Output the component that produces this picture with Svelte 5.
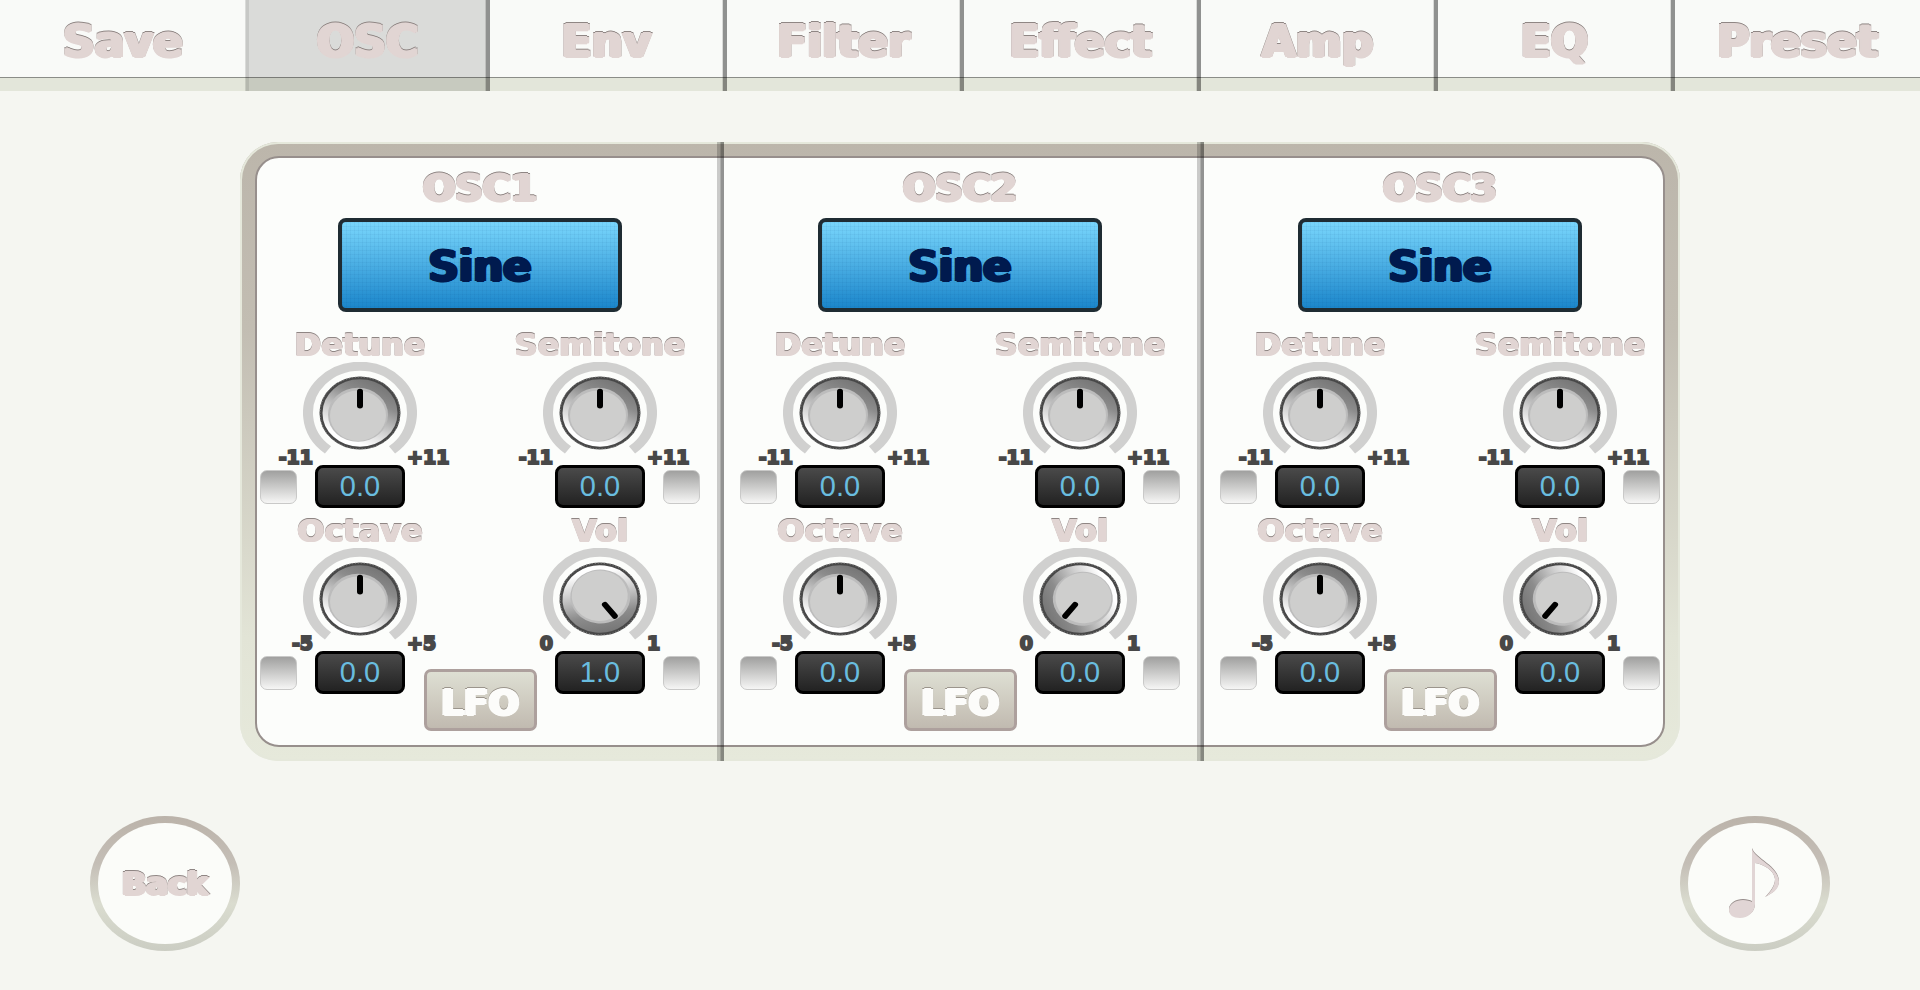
<script>
    const tabs = ["Save", "OSC", "Env", "Filter", "Effect", "Amp", "EQ", "Preset"];
    let activeTab = "OSC";

    // full sweep of a knob, in degrees either side of twelve o'clock
    const SWEEP = 142;

    let makeOsc = (name, vol) => ({
        name,
        wave: "Sine",
        knobs: [
            { label: "Detune", min: -11, max: 11, low: "-11", high: "+11", value: 0, on: false },
            { label: "Semitone", min: -11, max: 11, low: "-11", high: "+11", value: 0, on: false },
            { label: "Octave", min: -5, max: 5, low: "-5", high: "+5", value: 0, on: false },
            { label: "Vol", min: 0, max: 1, low: "0", high: "1", value: vol, on: false }
        ]
    });

    let oscs = [makeOsc("OSC1", 1), makeOsc("OSC2", 0), makeOsc("OSC3", 0)];

    let angle = (knob) => ((knob.value - knob.min) / (knob.max - knob.min)) * 2 * SWEEP - SWEEP;
</script>

<svelte:head>
    <title>OSC</title>
</svelte:head>

<nav class="tabs">
    {#each tabs as tab}
        <button class="tab" class:active={tab === activeTab} on:click={() => (activeTab = tab)}>
            <span class="etched">{tab}</span>
        </button>
    {/each}
</nav>

<main class="panel">
    {#each oscs as osc}
        <section class="osc">
            <h2 class="etched">{osc.name}</h2>
            <button class="screen">{osc.wave}</button>

            <div class="knobs">
                {#each osc.knobs as knob, i}
                    <div class="cell">
                        <label class="name etched" for="{osc.name}-{knob.label}">{knob.label}</label>
                        <div class="dial">
                            <svg viewBox="-57 -51 114 102" aria-hidden="true">
                                <defs>
                                    <linearGradient id="rim-{osc.name}-{i}" x1="0.75" y1="0" x2="0.25" y2="1">
                                        <stop offset="0" stop-color="#707070" />
                                        <stop offset="0.3" stop-color="#8c8c8c" />
                                        <stop offset="0.6" stop-color="#d0d0d0" />
                                        <stop offset="0.85" stop-color="#ffffff" />
                                    </linearGradient>
                                </defs>
                                <g transform="scale(1 0.9)">
                                    <path d="M-32 41 A52 52 0 1 1 32 41" fill="none" stroke="#d0d0cf" stroke-width="10" />
                                    <g transform="rotate({angle(knob)})">
                                        <circle r="39" fill="url(#rim-{osc.name}-{i})" stroke="#484848" stroke-width="3" />
                                        <circle r="40" fill="none" stroke="#999" stroke-width="1" stroke-dasharray="1 2" />
                                        <circle cx="-2" cy="2" r="30" fill="#bcbcbc" />
                                        <circle cx="-2" cy="3" r="28" fill="#cececd" />
                                        <path d="M0 -24V-8" stroke="#000" stroke-width="6" stroke-linecap="round" />
                                    </g>
                                </g>
                            </svg>
                            <input
                                type="range"
                                id="{osc.name}-{knob.label}"
                                min={knob.min}
                                max={knob.max}
                                step={knob.max === 1 ? 0.1 : 1}
                                bind:value={knob.value}
                            />
                        </div>
                        <div class="scale">
                            <span>{knob.low}</span>
                            <span>{knob.high}</span>
                        </div>
                        <div class="readout">
                            <input type="checkbox" aria-label="{knob.label} enable" bind:checked={knob.on} />
                            <input type="text" aria-label="{knob.label} value" value={knob.value.toFixed(1)} readonly />
                        </div>
                    </div>
                {/each}
            </div>

            <button class="lfo"><span>LFO</span></button>
        </section>
    {/each}
</main>

<footer>
    <button class="round"><span class="etched">Back</span></button>
    <button class="round" aria-label="Keyboard">
        <svg viewBox="0 0 52 72" aria-hidden="true">
            <path
                class="edge"
                d="M23 0C26 10 50 18 50 33C50 41 42 46 36 49C42 43 46 37 46 31C45 22 34 16 26 15V56C26 64 19 69 11 69C4 69 0 66 0 61C0 55 7 51 14 51C18 51 21 52 23 53Z"
            />
            <path
                class="note"
                d="M23 1C26 11 50 19 50 34C50 42 42 46 36 49C43 43 46 37 46 31C45 22 34 16 26 15V56C26 64 19 70 11 70C4 70 0 67 0 62C0 56 7 52 14 52C18 52 21 53 23 54Z"
            />
        </svg>
    </button>
</footer>

<style>
    :global(body) {
        background: #f5f6f1;
        font-family: "DejaVu Sans", Verdana, sans-serif;
    }

    button {
        border: 0;
        padding: 0;
        background: none;
        font-family: inherit;
        cursor: pointer;
    }

    /* currentColor shadows on all sides thicken the letters and round their corners */
    .etched,
    .screen,
    .lfo span {
        font-weight: bold;
        text-shadow: 1px 0, -1px 0, 0 1px, 0 -1px, 2px 0, -2px 0;
    }

    /* pale lettering pressed into the panel */
    .etched {
        color: #e1d5d3;
        filter: drop-shadow(0 -1px 0 #8f8684);
    }

    .tabs {
        display: grid;
        grid-template-columns: 249fr 241fr repeat(5, 237fr) 245fr;
        height: 91px;
        background: linear-gradient(#f9faf8 77px, #8b8d88 77px, #8b8d88 78px, #e3e6da 78px);
    }

    .tab {
        padding-bottom: 8px;
        font-size: 44px;
        border-right: 4px solid rgba(0, 0, 0, 0.42);
        box-shadow: inset -1px 0 0 rgba(0, 0, 0, 0.12);
    }

    .tab span {
        display: inline-block;
    }

    .tab:first-child {
        border-right: 3px solid rgba(0, 0, 0, 0.2);
    }

    .tab:last-child {
        border-right: 0;
        box-shadow: none;
    }

    .tab.active {
        background: rgba(0, 0, 0, 0.12);
        background-clip: padding-box;
    }

    .panel {
        position: relative;
        display: grid;
        grid-template-columns: repeat(3, 1fr);
        width: 75%;
        margin: 51px auto 55px;
        border-radius: 38px;
        background: linear-gradient(#bcb6ab, #c2bdb2 30%, #e2e4d6 80%, #e6e9db);
        box-shadow: inset 0 0 0 2px #e5e8db;
    }

    .panel::before {
        content: "";
        position: absolute;
        inset: 14px 15px;
        border: 2px solid #978f8c;
        border-radius: 24px;
        background: #fcfdfb;
    }

    .osc {
        position: relative;
        display: flex;
        flex-direction: column;
        align-items: center;
        padding: 22px 0 30px;
    }

    .osc:not(:last-child)::after {
        content: "";
        position: absolute;
        top: 0;
        bottom: 0;
        right: -4px;
        width: 7px;
        z-index: 1;
        background: linear-gradient(90deg, rgba(0, 0, 0, 0.2) 3px, rgba(0, 0, 0, 0.42) 4px);
    }

    h2 {
        margin: 0 0 6px;
        font-size: 38px;
        line-height: 48px;
    }

    .screen {
        width: 284px;
        height: 94px;
        margin-bottom: 16px;
        padding-top: 2px;
        border: 4px solid #1f2c33;
        border-radius: 8px;
        background:
            repeating-linear-gradient(90deg, rgba(0, 60, 120, 0.05) 0 1px, transparent 1px 4px),
            repeating-linear-gradient(rgba(0, 60, 120, 0.05) 0 1px, transparent 1px 4px),
            linear-gradient(#79d6fc, #1b86cb);
        color: #001a4e;
        font-size: 42px;
    }

    .knobs {
        display: grid;
        grid-template-columns: 1fr 1fr;
        width: 100%;
    }

    .cell {
        padding-bottom: 6px;
    }

    .name {
        display: block;
        font-size: 32px;
        line-height: 34px;
        text-align: center;
        text-shadow: 1px 0, -1px 0;
    }

    .dial {
        position: relative;
        width: 114px;
        height: 87px;
        margin: 0 auto;
    }

    .dial svg {
        display: block;
        width: 114px;
        height: 102px;
    }

    .dial input {
        position: absolute;
        inset: 0;
        width: 100%;
        height: 100%;
        margin: 0;
        opacity: 0;
        cursor: pointer;
    }

    .scale {
        position: relative;
        display: grid;
        grid-template-columns: 1fr 1fr;
        gap: 94px;
        color: #484848;
        font-size: 19px;
        font-weight: bold;
        line-height: 16px;
        -webkit-text-stroke: 2px #484848;
    }

    .scale span:first-child {
        text-align: right;
    }

    .readout {
        display: grid;
        grid-template-columns: 1fr 90px 1fr;
        align-items: center;
        padding: 0 20px;
    }

    .readout input {
        appearance: none;
        box-sizing: border-box;
        margin: 0;
    }

    .readout input[type="checkbox"] {
        width: 37px;
        height: 34px;
        border: 1px solid #c9c9c8;
        border-radius: 7px;
        background: linear-gradient(#a0a09f, #f6f6f5);
    }

    .readout input[type="checkbox"]:checked {
        background: linear-gradient(#4aa8dc, #bfe6fa);
    }

    .readout input[type="text"] {
        grid-column: 2;
        grid-row: 1;
        width: 90px;
        height: 43px;
        padding: 0;
        border: 3px solid #000;
        border-radius: 8px;
        background: linear-gradient(#4a4a4a, #222);
        color: #69bcdf;
        font: 29px "Liberation Sans", Arial, sans-serif;
        text-align: center;
    }

    .cell:nth-child(even) input[type="checkbox"] {
        grid-column: 3;
        justify-self: end;
    }

    .lfo {
        width: 113px;
        height: 62px;
        margin-top: -31px;
        padding-top: 4px;
        border: 3px solid #ada09d;
        border-radius: 7px;
        background: linear-gradient(#dedfd3, #c1bab0);
        color: #fcfcfa;
        font-size: 36px;
    }

    .lfo span {
        display: inline-block;
        filter: drop-shadow(0 -1px 0 #9b958c);
    }

    footer {
        display: flex;
        justify-content: space-between;
        padding: 0 90px 39px;
    }

    .round {
        width: 150px;
        height: 135px;
        border: 8px solid transparent;
        border-width: 7px 8px;
        border-radius: 50%;
        background:
            linear-gradient(#fbfcf9, #fbfcf9) padding-box,
            linear-gradient(#bbb3aa, #c4beb6 35%, #dadccf 65%, #cbcdc3) border-box;
        font-size: 32px;
    }

    .round span {
        display: inline-block;
    }

    .round svg {
        display: block;
        width: 52px;
        height: 72px;
        margin: 0 auto;
    }

    .edge {
        fill: #968c8a;
    }

    .note {
        fill: #e1d5d5;
    }
</style>
